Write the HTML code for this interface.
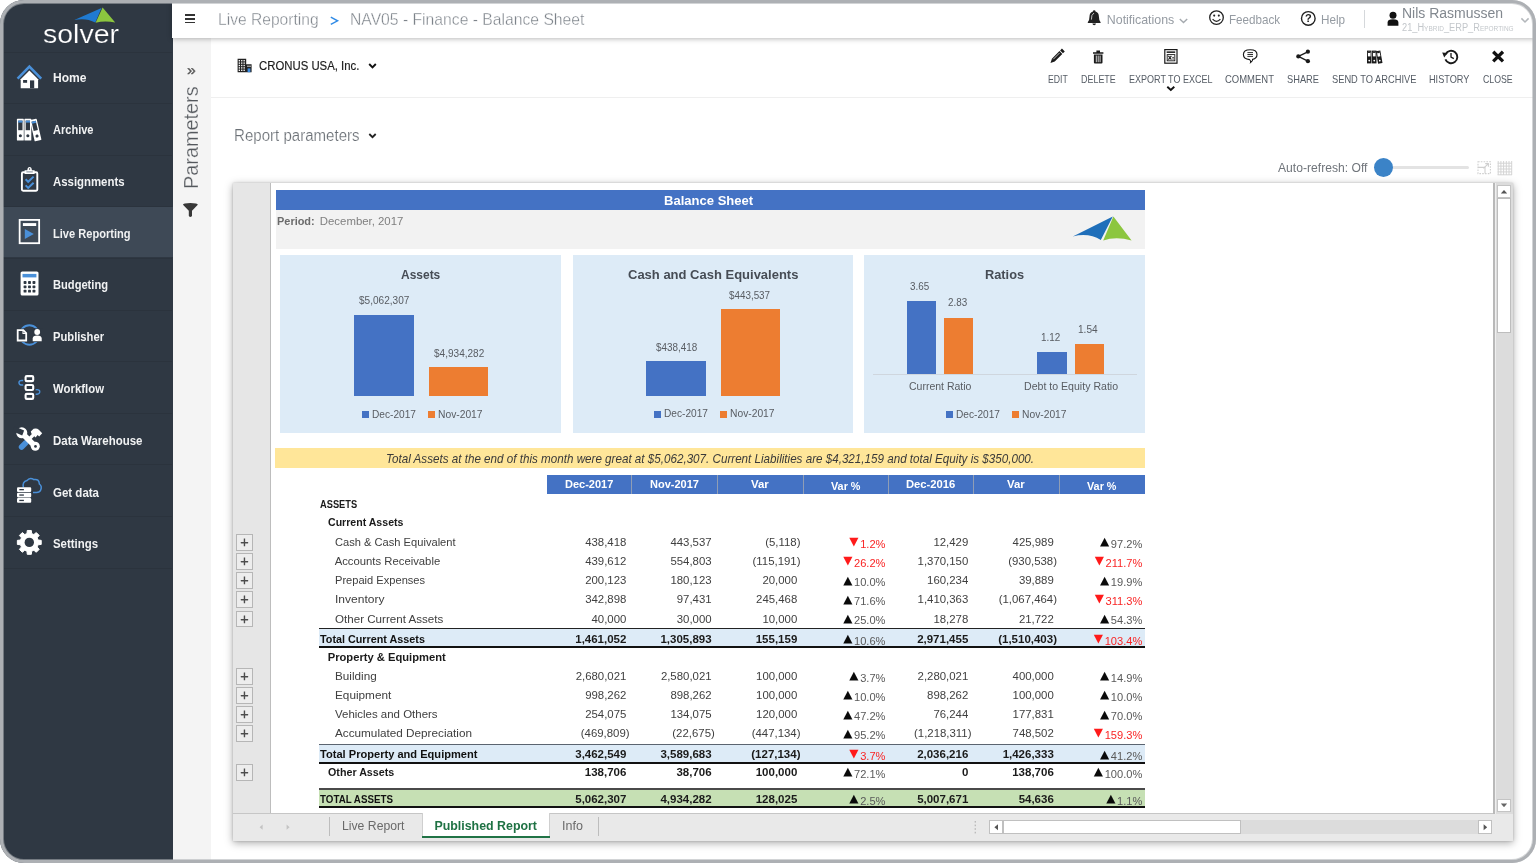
<!DOCTYPE html>
<html lang="en"><head><meta charset="utf-8"><title>NAV05 - Finance - Balance Sheet</title>
<style>
*{margin:0;padding:0;box-sizing:border-box}
html,body{width:1536px;height:863px;overflow:hidden;background:#fff}
body{font-family:"Liberation Sans",sans-serif;position:relative}
.t{position:absolute;white-space:nowrap;line-height:1;transform-origin:0 0;display:block}
.r{position:absolute}
svg{position:absolute;overflow:visible}
#frame{position:absolute;left:0;top:0;width:1536px;height:863px;border-radius:24px;overflow:hidden;background:#fff;will-change:transform}
#edge{position:absolute;left:0;top:0;width:1536px;height:863px;border-radius:24px;box-shadow:inset 0 0 0 3px #adb0b4,inset 0 0 0 4px rgba(173,176,180,.55);pointer-events:none;z-index:50}
.tri{font-family:"DejaVu Sans",sans-serif}
</style></head>
<body>
<div id="frame">
<div class="r" style="left:0.00px;top:0.00px;width:172.80px;height:863.00px;background:#2f3843;"></div>
<div class="r" style="left:172.80px;top:0.00px;width:38.00px;height:863.00px;background:#f4f4f4;"></div>
<div class="r" style="left:211.00px;top:97.30px;width:1325.00px;height:1.00px;background:#efefef;"></div>
<div class="r" style="left:172.00px;top:0.00px;width:1364.00px;height:38.00px;background:#fff;box-shadow:0 1px 5px rgba(0,0,0,.28);z-index:5"></div>
<div class="r" style="left:4.00px;top:51.50px;width:168.00px;height:1.00px;background:rgba(0,0,0,.08);"></div>
<div class="r" style="left:4.00px;top:103.10px;width:168.00px;height:1.00px;background:rgba(0,0,0,.08);"></div>
<div class="r" style="left:4.00px;top:154.70px;width:168.00px;height:1.00px;background:rgba(0,0,0,.08);"></div>
<div class="r" style="left:4.00px;top:206.30px;width:168.00px;height:1.00px;background:rgba(0,0,0,.08);"></div>
<div class="r" style="left:4.00px;top:257.90px;width:168.00px;height:1.00px;background:rgba(0,0,0,.08);"></div>
<div class="r" style="left:4.00px;top:309.50px;width:168.00px;height:1.00px;background:rgba(0,0,0,.08);"></div>
<div class="r" style="left:4.00px;top:361.10px;width:168.00px;height:1.00px;background:rgba(0,0,0,.08);"></div>
<div class="r" style="left:4.00px;top:412.70px;width:168.00px;height:1.00px;background:rgba(0,0,0,.08);"></div>
<div class="r" style="left:4.00px;top:464.30px;width:168.00px;height:1.00px;background:rgba(0,0,0,.08);"></div>
<div class="r" style="left:4.00px;top:515.90px;width:168.00px;height:1.00px;background:rgba(0,0,0,.08);"></div>
<div class="r" style="left:4.00px;top:567.50px;width:168.00px;height:1.00px;background:rgba(0,0,0,.08);"></div>
<div class="r" style="left:0.00px;top:207.30px;width:172.80px;height:49.70px;background:#3e4956;"></div>
<span class="t" style="left:52.50px;top:72px;font-size:12px;color:#f1f2f3;font-weight:700;transform:scaleX(1.0048);">Home</span>
<span class="t" style="left:52.50px;top:124px;font-size:12px;color:#f1f2f3;font-weight:700;transform:scaleX(0.9200);">Archive</span>
<span class="t" style="left:52.50px;top:176px;font-size:12px;color:#f1f2f3;font-weight:700;transform:scaleX(0.9489);">Assignments</span>
<span class="t" style="left:52.50px;top:228px;font-size:12px;color:#f1f2f3;font-weight:700;transform:scaleX(0.9225);">Live Reporting</span>
<span class="t" style="left:52.50px;top:279px;font-size:12px;color:#f1f2f3;font-weight:700;transform:scaleX(0.9271);">Budgeting</span>
<span class="t" style="left:52.50px;top:331px;font-size:12px;color:#f1f2f3;font-weight:700;transform:scaleX(0.9327);">Publisher</span>
<span class="t" style="left:52.50px;top:383px;font-size:12px;color:#f1f2f3;font-weight:700;transform:scaleX(0.9483);">Workflow</span>
<span class="t" style="left:52.50px;top:435px;font-size:12px;color:#f1f2f3;font-weight:700;transform:scaleX(0.9564);">Data Warehouse</span>
<span class="t" style="left:52.50px;top:487px;font-size:12px;color:#f1f2f3;font-weight:700;transform:scaleX(0.9581);">Get data</span>
<span class="t" style="left:52.50px;top:538px;font-size:12px;color:#f1f2f3;font-weight:700;transform:scaleX(0.9506);">Settings</span>
<svg style="left:70px;top:4px" width="50" height="24" viewBox="70 4 50 24"><path d="M74.3 20 L101.5 8 L95.3 22.5 Q86 17.5 74.3 20Z" fill="#1f7ad1"/><path d="M102.6 7.6 L115.2 22.6 Q105 20.2 95.6 22.8Z" fill="#8cc63f"/></svg>
<span class="t" style="left:43.40px;top:22px;font-size:25.5px;color:#fff;transform:scaleX(1.1173);-webkit-text-stroke:.2px #2f3843;">solver</span>
<svg style="left:0;top:0" width="172" height="600" viewBox="0 0 172 600"><path d="M17.6 78.6 L29.4 66.6 L41.2 78.6" fill="none" stroke="#4a90d9" stroke-width="2.6" stroke-linejoin="miter"/><path d="M20.7 79.3 L29.4 70.6 L38.1 79.3 V88.2 H20.7Z" fill="#fff"/><rect x="30" y="80.4" width="4.2" height="7.8" fill="#2f3843"/><rect x="23.1" y="80" width="4" height="2.8" fill="#2f3843"/><g transform=""><rect x="16.9" y="118.8" width="6.9" height="21.8" rx=".6" fill="#fff"/><rect x="18.2" y="120.6" width="4.3" height="9.6" fill="#2f3843"/><rect x="18.2" y="120.6" width="4.3" height="2" fill="#4a90d9"/><circle cx="20.349999999999998" cy="135.8" r="1.55" fill="#2f3843"/></g><g transform=""><rect x="24.4" y="118.8" width="6.9" height="21.8" rx=".6" fill="#fff"/><rect x="25.7" y="120.6" width="4.3" height="9.6" fill="#2f3843"/><rect x="25.7" y="120.6" width="4.3" height="2" fill="#4a90d9"/><circle cx="27.849999999999998" cy="135.8" r="1.55" fill="#2f3843"/></g><g transform="rotate(-13 35.6 130)"><rect x="32.2" y="119.2" width="6.9" height="21.8" rx=".6" fill="#fff"/><rect x="33.5" y="121.0" width="4.3" height="9.6" fill="#2f3843"/><rect x="33.5" y="121.0" width="4.3" height="2" fill="#4a90d9"/><circle cx="35.650000000000006" cy="136.2" r="1.55" fill="#2f3843"/></g><rect x="21.9" y="172.2" width="15.4" height="18.6" rx="1.2" fill="none" stroke="#fff" stroke-width="1.9"/><path d="M24.6 174 V170.3 H27.3 Q27.6 167.1 29.6 167.1 Q31.6 167.1 31.9 170.3 H34.6 V174Z" fill="#fff"/><rect x="26.2" y="171.2" width="6.8" height="1.2" rx=".6" fill="#9aa3ad"/><circle cx="29.6" cy="169" r=".7" fill="#2f3843"/><path d="M25.6 179.3 L28.2 181.8 L33.6 176.6" fill="none" stroke="#4a90d9" stroke-width="2"/><path d="M25.6 185.4 L28.2 187.9 L33.6 182.7" fill="none" stroke="#4a90d9" stroke-width="2"/><rect x="19.65" y="219.9" width="19.5" height="23.3" fill="none" stroke="#fff" stroke-width="1.8"/><rect x="22.9" y="223.1" width="13.3" height="2.9" fill="#fff"/><path d="M24.8 229 L33.8 234 L24.8 239Z" fill="#4a90d9"/><rect x="20.6" y="271.4" width="17.9" height="24.2" rx="1.6" fill="#fff"/><rect x="22.5" y="273.9" width="13.9" height="3.5" fill="#4a90d9"/><rect x="23.60" y="281.10" width="2.9" height="2.9" rx=".7" fill="#2f3843"/><rect x="28.05" y="281.10" width="2.9" height="2.9" rx=".7" fill="#2f3843"/><rect x="32.50" y="281.10" width="2.9" height="2.9" rx=".7" fill="#2f3843"/><rect x="23.60" y="285.40" width="2.9" height="2.9" rx=".7" fill="#2f3843"/><rect x="28.05" y="285.40" width="2.9" height="2.9" rx=".7" fill="#2f3843"/><rect x="32.50" y="285.40" width="2.9" height="2.9" rx=".7" fill="#2f3843"/><rect x="23.60" y="289.70" width="2.9" height="2.9" rx=".7" fill="#2f3843"/><rect x="28.05" y="289.70" width="2.9" height="2.9" rx=".7" fill="#2f3843"/><rect x="32.50" y="289.70" width="2.9" height="2.9" rx=".7" fill="#2f3843"/><circle cx="29.4" cy="335" r="9.7" fill="none" stroke="#4a90d9" stroke-width="1.9"/><rect x="15.6" y="328.6" width="12" height="13.4" fill="#2f3843"/><rect x="32" y="328.4" width="11" height="13.6" fill="#2f3843"/><path d="M17.7 330.2 H23.3 L26.2 333.2 V340.5 H17.7Z" fill="none" stroke="#fff" stroke-width="1.8"/><path d="M23 330.4 V333.5 H26" fill="none" stroke="#fff" stroke-width="1.1"/><circle cx="37.2" cy="332" r="2.9" fill="#fff"/><path d="M32.7 341.3 V338.6 Q32.7 335.6 37.2 335.6 Q41.7 335.6 41.7 338.6 V341.3Z" fill="#fff"/><rect x="25.6" y="376.1" width="7.6" height="5" rx="1.2" fill="none" stroke="#fff" stroke-width="2.1"/><rect x="25.6" y="385" width="7.6" height="5" rx="1.2" fill="none" stroke="#fff" stroke-width="2.1"/><rect x="25.6" y="393.9" width="7.6" height="5" rx="1.2" fill="none" stroke="#fff" stroke-width="2.1"/><path d="M23.2 380.6 Q18.6 380 19 383 Q19.4 385.6 23.2 385" fill="none" stroke="#4a90d9" stroke-width="1.5"/><path d="M35.6 389.8 Q40.2 389.2 39.8 392 Q39.4 394.6 35.6 394.2" fill="none" stroke="#4a90d9" stroke-width="1.3"/><path d="M21.6 447 L25.6 443" stroke="#4a90d9" stroke-width="5.6" stroke-linecap="round"/><path d="M27.6 440.6 L34.6 433.6" stroke="#fff" stroke-width="3.4"/><path d="M30.8 431.6 L33.6 428.8 Q36.8 427.8 38.8 429.8 L42.2 433.2 L39.2 436.6 L37.6 435 L35.6 437.4 L31.4 433.4Z" fill="#fff"/><path d="M23.4 434.6 L34.6 445.8" stroke="#fff" stroke-width="5.6"/><circle cx="21.8" cy="432.8" r="5.5" fill="#fff"/><path d="M17.4 424 L24.8 431.6 L21.2 435.4 L13.8 428Z" fill="#2f3843" transform="rotate(-22 21.8 432.8)"/><circle cx="35.3" cy="446.3" r="4.5" fill="#fff"/><circle cx="35.5" cy="446.4" r="1.35" fill="#2f3843"/><path d="M23.4 487.5 Q22 481.6 27 480.6 Q29.6 476.8 34 479.6 Q39 478.6 39.4 484 Q42.4 486.2 40.6 490.2 Q39.6 492.4 36.6 492.4 H33" fill="none" stroke="#4a90d9" stroke-width="1.5"/><rect x="17" y="487.3" width="14.2" height="4.7" rx="1.1" fill="#fff"/><rect x="19.3" y="489.0" width="4.6" height="1.3" fill="#2f3843"/><rect x="17" y="492.7" width="14.2" height="4.7" rx="1.1" fill="#fff"/><rect x="19.3" y="494.4" width="4.6" height="1.3" fill="#2f3843"/><rect x="17" y="498.1" width="14.2" height="4.7" rx="1.1" fill="#fff"/><rect x="19.3" y="499.8" width="4.6" height="1.3" fill="#2f3843"/><path d="M26.96 533.61 L27.25 530.47 L31.35 530.47 L31.64 533.61 L33.86 534.53 L36.29 532.52 L39.18 535.41 L37.17 537.84 L38.09 540.06 L41.23 540.35 L41.23 544.45 L38.09 544.74 L37.17 546.96 L39.18 549.39 L36.29 552.28 L33.86 550.27 L31.64 551.19 L31.35 554.33 L27.25 554.33 L26.96 551.19 L24.74 550.27 L22.31 552.28 L19.42 549.39 L21.43 546.96 L20.51 544.74 L17.37 544.45 L17.37 540.35 L20.51 540.06 L21.43 537.84 L19.42 535.41 L22.31 532.52 L24.74 534.53Z" fill="#fff" stroke="#fff" stroke-width="1" stroke-linejoin="round"/><circle cx="29.3" cy="542.4" r="4.7" fill="#2f3843"/></svg>
<div class="r" style="left:185.00px;top:14.10px;width:9.60px;height:1.70px;background:#333;z-index:6;"></div>
<div class="r" style="left:185.00px;top:17.90px;width:9.60px;height:1.70px;background:#333;z-index:6;"></div>
<div class="r" style="left:185.00px;top:21.70px;width:9.60px;height:1.70px;background:#333;z-index:6;"></div>
<span class="t" style="left:218.10px;top:11px;font-size:16.1px;color:#7d838a;transform:scaleX(0.9690);z-index:6;-webkit-text-stroke:.35px #fff;">Live Reporting</span>
<svg style="left:329px;top:14px;z-index:6" width="10" height="12" viewBox="0 0 10 12"><path d="M1.8 3.2 L8.6 6.8 L1.8 10.4" fill="none" stroke="#2e8ae6" stroke-width="1.4"/></svg>
<span class="t" style="left:350.00px;top:11px;font-size:16.1px;color:#7d838a;transform:scaleX(0.9753);z-index:6;-webkit-text-stroke:.35px #fff;">NAV05 - Finance - Balance Sheet</span>
<svg style="left:1086px;top:9px;z-index:6" width="16" height="17" viewBox="1086 9 16 17"><path d="M1094.2 10.2 Q1095.6 10.2 1095.5 11.6 Q1098.9 12.6 1098.9 16.6 Q1098.9 20.6 1100.6 22.2 V22.9 H1087.8 V22.2 Q1089.5 20.6 1089.5 16.6 Q1089.5 12.6 1092.9 11.6 Q1092.8 10.2 1094.2 10.2Z" fill="#222"/><path d="M1092.4 23.6 H1096 Q1095.8 25.2 1094.2 25.2 Q1092.6 25.2 1092.4 23.6Z" fill="#222"/><path d="M1091.4 19.6 Q1091.2 14.4 1094 13" fill="none" stroke="#fff" stroke-width=".7"/></svg>
<span class="t" style="left:1106.80px;top:14px;font-size:12.4px;color:#959ba2;z-index:6;">Notifications</span>
<svg style="left:1179px;top:18px;z-index:6" width="9" height="6" viewBox="0 0 9 6"><path d="M.8 1 L4.5 4.6 L8.2 1" fill="none" stroke="#a4a9ae" stroke-width="1.4"/></svg>
<svg style="left:1208px;top:9px;z-index:6" width="17" height="17" viewBox="1208 9 17 17"><circle cx="1216.5" cy="17.6" r="6.8" fill="none" stroke="#222" stroke-width="1.3"/><circle cx="1214.2" cy="15.6" r="1.05" fill="#222"/><circle cx="1218.8" cy="15.6" r="1.05" fill="#222"/><path d="M1212.6 19.2 Q1216.5 23.4 1220.4 19.2" fill="none" stroke="#222" stroke-width="1.2"/></svg>
<span class="t" style="left:1228.80px;top:14px;font-size:12.4px;color:#959ba2;transform:scaleX(0.9402);z-index:6;">Feedback</span>
<svg style="left:1300px;top:10px;z-index:6" width="17" height="17" viewBox="1300 10 17 17"><circle cx="1308.3" cy="18.4" r="6.8" fill="none" stroke="#222" stroke-width="1.4"/></svg>
<span class="t" style="left:1304.94px;top:13px;font-size:11px;color:#222;font-weight:700;z-index:6;">?</span>
<span class="t" style="left:1320.70px;top:14px;font-size:12.4px;color:#959ba2;transform:scaleX(0.9450);z-index:6;">Help</span>
<div class="r" style="left:1364.00px;top:9.70px;width:1.00px;height:18.50px;background:#d5d8db;z-index:6;"></div>
<svg style="left:1386px;top:11px;z-index:6" width="14" height="16" viewBox="1386 11 14 16"><circle cx="1393" cy="15.3" r="3.5" fill="#111"/><path d="M1387.6 25.8 V22.4 Q1387.6 19.2 1393 19.2 Q1398.4 19.2 1398.4 22.4 V25.8Z" fill="#111"/></svg>
<span class="t" style="left:1402.00px;top:6px;font-size:14px;color:#82888f;z-index:6;">Nils Rasmussen</span>
<span class="t" style="left:1402px;top:23px;font-size:10px;color:#c3c7cb;font-variant:small-caps;z-index:6;transform:scaleX(0.9251)">21_Hybrid_ERP_Reporting</span>
<svg style="left:1520px;top:17px;z-index:6" width="10" height="7" viewBox="0 0 10 7"><path d="M1.4 1.4 L5 5 L8.6 1.4" fill="none" stroke="#b3b7bb" stroke-width="1.5"/></svg>
<span class="t" style="left:187.40px;top:62px;font-size:15px;color:#555;transform:scaleX(1.0548);-webkit-text-stroke:.3px #555;">»</span>
<span class="t" style="left:181.7px;top:188.5px;font-size:19.6px;color:#54585d;transform-origin:0 0;transform:rotate(-90deg) scaleX(1.0128);-webkit-text-stroke:.25px #f4f4f4">Parameters</span>
<svg style="left:182px;top:202px" width="17" height="16" viewBox="182 202 17 16"><path d="M183 204.8 Q183 203.1 190.4 203.1 Q197.8 203.1 197.8 204.8 L192 210.8 V215.8 Q192 216.9 190.4 216.9 Q188.8 216.9 188.8 215.8 V210.8Z" fill="#383838"/></svg>
<svg style="left:236px;top:57px" width="17" height="17" viewBox="236 57 17 17"><path d="M237.6 58.8 H246.2 V72.2 H237.6Z M246.2 64.2 H251.6 V72.2 H246.2Z" fill="#222"/><rect x="238.70" y="60.00" width="1.3" height="1.4" fill="#fff"/><rect x="241.10" y="60.00" width="1.3" height="1.4" fill="#fff"/><rect x="243.50" y="60.00" width="1.3" height="1.4" fill="#fff"/><rect x="238.70" y="62.40" width="1.3" height="1.4" fill="#fff"/><rect x="241.10" y="62.40" width="1.3" height="1.4" fill="#fff"/><rect x="243.50" y="62.40" width="1.3" height="1.4" fill="#fff"/><rect x="238.70" y="64.80" width="1.3" height="1.4" fill="#fff"/><rect x="241.10" y="64.80" width="1.3" height="1.4" fill="#fff"/><rect x="243.50" y="64.80" width="1.3" height="1.4" fill="#fff"/><rect x="238.70" y="67.20" width="1.3" height="1.4" fill="#fff"/><rect x="241.10" y="67.20" width="1.3" height="1.4" fill="#fff"/><rect x="243.50" y="67.20" width="1.3" height="1.4" fill="#fff"/><rect x="238.70" y="69.60" width="1.3" height="1.4" fill="#fff"/><rect x="241.10" y="69.60" width="1.3" height="1.4" fill="#fff"/><rect x="243.50" y="69.60" width="1.3" height="1.4" fill="#fff"/><rect x="247.4" y="65.6" width="1.2" height="1.3" fill="#fff"/><rect x="249.4" y="65.6" width="1.2" height="1.3" fill="#fff"/><rect x="247.6" y="68.4" width="2.8" height="3.8" fill="#3b8be0"/></svg>
<span class="t" style="left:259.20px;top:60px;font-size:12.6px;color:#1b1b1b;transform:scaleX(0.9019);-webkit-text-stroke:.18px #1b1b1b;">CRONUS USA, Inc.</span>
<svg style="left:368px;top:62px" width="9" height="8" viewBox="0 0 9 8"><path d="M1.2 2 L4.5 5.4 L7.8 2" fill="none" stroke="#111" stroke-width="1.9"/></svg>
<span class="t" style="left:234.40px;top:128px;font-size:15.8px;color:#6b7076;transform:scaleX(0.9535);-webkit-text-stroke:.2px #fff;">Report parameters</span>
<svg style="left:368px;top:132px" width="9" height="8" viewBox="0 0 9 8"><path d="M1.3 2 L4.5 5.2 L7.7 2" fill="none" stroke="#222" stroke-width="1.8"/></svg>
<span class="t" style="left:1277.60px;top:162px;font-size:12.2px;color:#70757b;transform:scaleX(0.9949);">Auto-refresh: Off</span>
<div class="r" style="left:1386.00px;top:166.00px;width:83.40px;height:3.00px;background:#e3e3e3;border-radius:2px"></div>
<div class="r" style="left:1373.60px;top:158.00px;width:19.40px;height:19.40px;background:#3b83c7;border-radius:50%"></div>
<svg style="left:1476px;top:160px" width="38" height="16" viewBox="1476 160 38 16"><g fill="none" stroke="#cfcfcf" stroke-width="1.1"><path d="M1478 161.8 H1490.4 V173.6 H1478Z" stroke-dasharray="1.6 1.2"/><path d="M1478 167.4 H1485 V173.6"/><path d="M1483.4 168.4 L1488.4 163.6 M1485.2 163.6 H1488.4 V166.8"/></g><g stroke="#d4d4d4" stroke-width="1"><path d="M1498.2 161 V175"/><path d="M1500.9 161 V175"/><path d="M1503.6 161 V175"/><path d="M1506.3 161 V175"/><path d="M1509.0 161 V175"/><path d="M1511.7 161 V175"/><path d="M1497.6 163.2 H1512"/><path d="M1497.6 166.1 H1512"/><path d="M1497.6 169.0 H1512"/><path d="M1497.6 171.9 H1512"/><path d="M1497.6 174.8 H1512"/></g></svg>
<span class="t" style="left:1047.50px;top:75px;font-size:10.2px;color:#555c65;transform:scaleX(0.8522);">EDIT</span>
<span class="t" style="left:1081.00px;top:75px;font-size:10.2px;color:#555c65;transform:scaleX(0.8770);">DELETE</span>
<span class="t" style="left:1128.60px;top:75px;font-size:10.2px;color:#555c65;transform:scaleX(0.8848);">EXPORT TO EXCEL</span>
<span class="t" style="left:1225.40px;top:75px;font-size:10.2px;color:#555c65;transform:scaleX(0.9299);">COMMENT</span>
<span class="t" style="left:1287.20px;top:75px;font-size:10.2px;color:#555c65;transform:scaleX(0.9105);">SHARE</span>
<span class="t" style="left:1332.00px;top:75px;font-size:10.2px;color:#555c65;transform:scaleX(0.9127);">SEND TO ARCHIVE</span>
<span class="t" style="left:1429.30px;top:75px;font-size:10.2px;color:#555c65;transform:scaleX(0.8984);">HISTORY</span>
<span class="t" style="left:1483.00px;top:75px;font-size:10.2px;color:#555c65;transform:scaleX(0.8589);">CLOSE</span>
<svg style="left:1040px;top:44px" width="480" height="50" viewBox="1040 44 480 50"><g transform="rotate(45 1057 56.4)"><path d="M1055 47.4 H1059 V50 H1055Z M1055 50.9 H1059 V61.6 L1057 65.6 L1055 61.6Z" fill="#1a1a1a"/><path d="M1056.4 52 V61" stroke="#fff" stroke-width=".7"/></g><path d="M1093 52.2 H1103.4 V53.7 H1093Z M1096.4 50.6 H1100 V52.2 H1096.4Z" fill="#1a1a1a"/><path d="M1093.9 54.6 H1102.5 V62.6 Q1102.5 63.6 1101.5 63.6 H1094.9 Q1093.9 63.6 1093.9 62.6Z" fill="#1a1a1a"/><path d="M1096.3 55.6 V62.2 M1098.2 55.6 V62.2 M1100.1 55.6 V62.2" stroke="#fff" stroke-width=".8"/><rect x="1164.8" y="49.6" width="12.2" height="13.6" fill="none" stroke="#1a1a1a" stroke-width="1.2"/><rect x="1166.6" y="51.4" width="8.6" height="1.5" fill="#1a1a1a"/><rect x="1167.2" y="54.6" width="7.6" height="6.2" fill="none" stroke="#1a1a1a" stroke-width=".9"/><path d="M1168.4 55.8 L1171.4 59.6 M1171.4 55.8 L1168.4 59.6" stroke="#1a1a1a" stroke-width="1.1"/><path d="M1172.2 57.4 H1174 M1172.2 59 H1174" stroke="#1a1a1a" stroke-width=".8"/><path d="M1167.3 86.8 L1170.8 90 L1174.3 86.8" fill="none" stroke="#111" stroke-width="1.9"/><path d="M1250.2 49.7 Q1257 49.7 1257 54.6 Q1257 58.6 1252.6 59.4 Q1252.8 61.4 1250.6 62.6 Q1251.2 60.8 1249.6 59.6 Q1243.4 59.2 1243.4 54.6 Q1243.4 49.7 1250.2 49.7Z" fill="none" stroke="#1a1a1a" stroke-width="1.15"/><path d="M1247.4 52.6 H1253 M1247.4 54.5 H1253 M1247.4 56.4 H1253" stroke="#1a1a1a" stroke-width=".9"/><path d="M1298.4 56.4 L1307.8 51.8 M1298.4 56.4 L1307.8 61.2" stroke="#1a1a1a" stroke-width="1.3"/><circle cx="1298.3" cy="56.4" r="2.1" fill="#1a1a1a"/><circle cx="1307.9" cy="51.7" r="2.1" fill="#1a1a1a"/><circle cx="1307.9" cy="61.2" r="2.1" fill="#1a1a1a"/><g transform=""><rect x="1367" y="50.6" width="4.5" height="12.8" fill="#1a1a1a"/><rect x="1367.9" y="51.800000000000004" width="2.7" height="4.6" fill="#fff"/><rect x="1367.9" y="51.800000000000004" width="2.7" height="1.1" fill="#1a1a1a"/><circle cx="1369.25" cy="60.6" r=".9" fill="#fff"/></g><g transform=""><rect x="1372" y="50.6" width="4.5" height="12.8" fill="#1a1a1a"/><rect x="1372.9" y="51.800000000000004" width="2.7" height="4.6" fill="#fff"/><rect x="1372.9" y="51.800000000000004" width="2.7" height="1.1" fill="#1a1a1a"/><circle cx="1374.25" cy="60.6" r=".9" fill="#fff"/></g><g transform="rotate(-10 1379 57)"><rect x="1376.9" y="50.8" width="4.5" height="12.8" fill="#1a1a1a"/><rect x="1377.8000000000002" y="52.0" width="2.7" height="4.6" fill="#fff"/><rect x="1377.8000000000002" y="52.0" width="2.7" height="1.1" fill="#1a1a1a"/><circle cx="1379.15" cy="60.8" r=".9" fill="#fff"/></g><path d="M1445.6 54.2 A6.2 6.2 0 1 1 1445.4 59.4" fill="none" stroke="#1a1a1a" stroke-width="1.9"/><path d="M1442.2 52.4 L1447.6 53 L1444.2 57.6Z" fill="#1a1a1a"/><path d="M1451 53 V57 L1453.8 58.6" fill="none" stroke="#1a1a1a" stroke-width="1.3"/><path d="M1493.2 51.8 L1503 61.4 M1503 51.8 L1493.2 61.4" stroke="#111" stroke-width="3.3"/></svg>
<div class="r" style="left:233.30px;top:183.20px;width:1280.10px;height:657.40px;background:#fff;box-shadow:0 2px 8px rgba(0,0,0,.34),0 0 2px rgba(0,0,0,.18)"></div>
<div class="r" style="left:233.30px;top:183.20px;width:36.50px;height:630.00px;background:#e6e6e6;"></div>
<div class="r" style="left:269.60px;top:183.20px;width:1.20px;height:630.00px;background:#bdbdbd;"></div>
<div class="r" style="left:233.30px;top:813.60px;width:1280.10px;height:27.00px;background:#e9e9e9;"></div>
<div class="r" style="left:233.30px;top:812.60px;width:1260.00px;height:1.40px;background:#c6c6c6;"></div>
<div class="r" style="left:1492.80px;top:183.20px;width:20.60px;height:630.40px;background:#dcdcdc;"></div>
<div class="r" style="left:1492.80px;top:183.20px;width:2.00px;height:630.40px;background:#b9b9b9;"></div>
<div class="r" style="left:1494.80px;top:183.20px;width:1.40px;height:630.40px;background:#efefef;"></div>
<div class="r" style="left:1497.00px;top:184.60px;width:14.00px;height:13.80px;background:#fff;border:1px solid #c4c4c4"></div>
<div class="r" style="left:1497.00px;top:198.40px;width:14.00px;height:135.00px;background:#fff;border:1px solid #bdbdbd"></div>
<div class="r" style="left:1497.00px;top:798.80px;width:14.00px;height:13.20px;background:#fff;border:1px solid #c4c4c4"></div>
<svg style="left:1497px;top:184px" width="14" height="630" viewBox="1497 184 14 630"><path d="M1500.8 193.6 L1504 190 L1507.2 193.6Z" fill="#555"/><path d="M1500.8 803.6 L1504 807.2 L1507.2 803.6Z" fill="#666"/></svg>
<div class="r" style="left:989.40px;top:820.40px;width:503.00px;height:13.60px;background:#dcdcdc;"></div>
<div class="r" style="left:989.40px;top:820.40px;width:13.80px;height:13.60px;background:#fff;border:1px solid #c0c0c0"></div>
<div class="r" style="left:1003.20px;top:820.40px;width:237.80px;height:13.60px;background:#fff;border:1px solid #c0c0c0"></div>
<div class="r" style="left:1478.20px;top:820.40px;width:14.20px;height:13.60px;background:#fff;border:1px solid #c0c0c0"></div>
<svg style="left:970px;top:818px" width="530" height="18" viewBox="970 818 530 18"><path d="M998 824.2 L994.4 827.2 L998 830.2Z" fill="#555"/><path d="M1483.6 824.2 L1487.2 827.2 L1483.6 830.2Z" fill="#555"/><g fill="#bbb"><rect x="974.6" y="821" width="1.4" height="1.6"/><rect x="974.6" y="824.6" width="1.4" height="1.6"/><rect x="974.6" y="828.2" width="1.4" height="1.6"/><rect x="974.6" y="831.8" width="1.4" height="1.6"/></g></svg>
<svg style="left:255px;top:820px" width="40" height="14" viewBox="255 820 40 14"><path d="M262.6 824.6 L259.6 827.2 L262.6 829.8Z" fill="#c3c3c3"/><path d="M286.6 824.6 L289.6 827.2 L286.6 829.8Z" fill="#c3c3c3"/></svg>
<div class="r" style="left:329.20px;top:817.40px;width:1.20px;height:18.40px;background:#bdbdbd;"></div>
<span class="t" style="left:342.00px;top:820px;font-size:12.3px;color:#6a6a6a;transform:scaleX(0.9936);">Live Report</span>
<div class="r" style="left:422.00px;top:813.20px;width:128.00px;height:22.60px;background:#fff;border-left:1px solid #cfcfcf;border-right:1px solid #cfcfcf"></div>
<div class="r" style="left:422.00px;top:835.60px;width:128.00px;height:2.20px;background:#217346;"></div>
<span class="t" style="left:434.40px;top:820px;font-size:12.4px;color:#1f7244;font-weight:700;">Published Report</span>
<span class="t" style="left:562.00px;top:820px;font-size:12.3px;color:#6a6a6a;transform:scaleX(1.0187);">Info</span>
<div class="r" style="left:598.00px;top:817.40px;width:1.20px;height:18.40px;background:#bdbdbd;"></div>
<div class="r" style="left:275.50px;top:189.80px;width:869.80px;height:19.80px;background:#4472c4;"></div>
<span class="t" style="left:664.00px;top:195px;font-size:12.6px;color:#fff;font-weight:700;transform:scaleX(1.0355);">Balance Sheet</span>
<div class="r" style="left:275.50px;top:209.60px;width:869.80px;height:39.50px;background:#f2f2f2;"></div>
<span class="t" style="left:277.00px;top:216px;font-size:11.4px;color:#6b6b6b;font-weight:700;transform:scaleX(0.9600);">Period:</span>
<span class="t" style="left:319.80px;top:216px;font-size:11.4px;color:#7f7f7f;">December, 2017</span>
<svg style="left:1070px;top:214px" width="64" height="28" viewBox="1070 214 64 28"><path d="M1072.8 236.4 L1112.8 216.4 L1100.8 240 Q1089 232.6 1072.8 236.4Z" fill="#1f6fba"/><path d="M1113.4 216.6 L1131.6 240.4 Q1116 236.2 1103.2 240.4Z" fill="#8cc63f"/></svg>
<div class="r" style="left:280.20px;top:254.60px;width:281.20px;height:178.40px;background:#ddebf7;"></div>
<span class="t" style="left:400.60px;top:269px;font-size:12.6px;color:#464c55;font-weight:700;transform:scaleX(0.9510);">Assets</span>
<span class="t" style="left:358.50px;top:296px;font-size:10.4px;color:#585c62;transform:scaleX(0.9683);">$5,062,307</span>
<div class="r" style="left:354.00px;top:315.00px;width:59.70px;height:80.90px;background:#4472c4;"></div>
<span class="t" style="left:433.80px;top:349px;font-size:10.4px;color:#585c62;transform:scaleX(0.9663);">$4,934,282</span>
<div class="r" style="left:429.30px;top:366.50px;width:58.70px;height:29.40px;background:#ed7d31;"></div>
<div class="r" style="left:361.50px;top:410.60px;width:7.30px;height:7.20px;background:#4472c4;"></div>
<span class="t" style="left:371.60px;top:410px;font-size:10.2px;color:#585c62;transform:scaleX(0.9948);">Dec-2017</span>
<div class="r" style="left:428.00px;top:410.60px;width:7.30px;height:7.20px;background:#ed7d31;"></div>
<span class="t" style="left:438.30px;top:410px;font-size:10.2px;color:#585c62;transform:scaleX(1.0084);">Nov-2017</span>
<div class="r" style="left:572.60px;top:254.60px;width:280.80px;height:178.40px;background:#ddebf7;"></div>
<span class="t" style="left:627.50px;top:269px;font-size:12.6px;color:#464c55;font-weight:700;transform:scaleX(1.0318);">Cash and Cash Equivalents</span>
<span class="t" style="left:729.20px;top:291px;font-size:10.4px;color:#585c62;transform:scaleX(0.9475);">$443,537</span>
<div class="r" style="left:721.30px;top:309.40px;width:59.10px;height:86.90px;background:#ed7d31;"></div>
<span class="t" style="left:655.70px;top:343px;font-size:10.4px;color:#585c62;transform:scaleX(0.9521);">$438,418</span>
<div class="r" style="left:646.00px;top:361.30px;width:59.70px;height:35.00px;background:#4472c4;"></div>
<div class="r" style="left:653.60px;top:410.60px;width:7.30px;height:7.20px;background:#4472c4;"></div>
<span class="t" style="left:664.00px;top:409px;font-size:10.2px;color:#585c62;transform:scaleX(0.9948);">Dec-2017</span>
<div class="r" style="left:720.20px;top:410.60px;width:7.30px;height:7.20px;background:#ed7d31;"></div>
<span class="t" style="left:730.30px;top:409px;font-size:10.2px;color:#585c62;transform:scaleX(1.0084);">Nov-2017</span>
<div class="r" style="left:864.00px;top:254.60px;width:281.30px;height:178.40px;background:#ddebf7;"></div>
<span class="t" style="left:984.90px;top:269px;font-size:12.6px;color:#464c55;font-weight:700;transform:scaleX(1.0154);">Ratios</span>
<div class="r" style="left:873.00px;top:373.90px;width:264.40px;height:1.00px;background:#cfd6de;"></div>
<span class="t" style="left:910.30px;top:282px;font-size:10.4px;color:#585c62;transform:scaleX(0.9485);">3.65</span>
<div class="r" style="left:906.50px;top:301.00px;width:29.40px;height:72.90px;background:#4472c4;"></div>
<span class="t" style="left:947.60px;top:298px;font-size:10.4px;color:#585c62;transform:scaleX(0.9485);">2.83</span>
<div class="r" style="left:943.80px;top:318.00px;width:28.90px;height:55.90px;background:#ed7d31;"></div>
<span class="t" style="left:1040.70px;top:333px;font-size:10.4px;color:#585c62;transform:scaleX(0.9535);">1.12</span>
<div class="r" style="left:1037.00px;top:351.60px;width:30.30px;height:22.30px;background:#4472c4;"></div>
<span class="t" style="left:1078.20px;top:325px;font-size:10.4px;color:#585c62;transform:scaleX(0.9683);">1.54</span>
<div class="r" style="left:1074.60px;top:343.70px;width:29.60px;height:30.20px;background:#ed7d31;"></div>
<span class="t" style="left:908.80px;top:382px;font-size:10.2px;color:#585c62;transform:scaleX(1.0304);">Current Ratio</span>
<span class="t" style="left:1024.00px;top:382px;font-size:10.2px;color:#585c62;transform:scaleX(1.0384);">Debt to Equity Ratio</span>
<div class="r" style="left:945.60px;top:410.60px;width:7.30px;height:7.20px;background:#4472c4;"></div>
<span class="t" style="left:955.50px;top:410px;font-size:10.2px;color:#585c62;transform:scaleX(0.9948);">Dec-2017</span>
<div class="r" style="left:1011.80px;top:410.60px;width:7.30px;height:7.20px;background:#ed7d31;"></div>
<span class="t" style="left:1022.20px;top:410px;font-size:10.2px;color:#585c62;transform:scaleX(1.0084);">Nov-2017</span>
<div class="r" style="left:275.30px;top:447.80px;width:870.00px;height:20.20px;background:#ffe699;"></div>
<span class="t" style="left:385.90px;top:454px;font-size:11.9px;color:#3a3a3a;font-style:italic;transform:scaleX(0.9788);">Total Assets at the end of this month were great at $5,062,307. Current Liabilities are $4,321,159 and total Equity is $350,000.</span>
<div class="r" style="left:546.80px;top:474.80px;width:598.50px;height:19.50px;background:#4472c4;"></div>
<div class="r" style="left:631.10px;top:474.80px;width:1.00px;height:19.50px;background:#8f9db5;"></div>
<div class="r" style="left:716.70px;top:474.80px;width:1.00px;height:19.50px;background:#8f9db5;"></div>
<div class="r" style="left:802.50px;top:474.80px;width:1.00px;height:19.50px;background:#8f9db5;"></div>
<div class="r" style="left:887.70px;top:474.80px;width:1.00px;height:19.50px;background:#8f9db5;"></div>
<div class="r" style="left:973.10px;top:474.80px;width:1.00px;height:19.50px;background:#8f9db5;"></div>
<div class="r" style="left:1058.90px;top:474.80px;width:1.00px;height:19.50px;background:#8f9db5;"></div>
<span class="t" style="left:564.80px;top:478px;font-size:11.6px;color:#fff;font-weight:700;transform:scaleX(0.9499);">Dec-2017</span>
<span class="t" style="left:649.60px;top:478px;font-size:11.6px;color:#fff;font-weight:700;transform:scaleX(0.9499);">Nov-2017</span>
<span class="t" style="left:750.60px;top:478px;font-size:11.6px;color:#fff;font-weight:700;transform:scaleX(0.9854);">Var</span>
<span class="t" style="left:830.80px;top:480px;font-size:11.6px;color:#fff;font-weight:700;transform:scaleX(0.9335);">Var %</span>
<span class="t" style="left:906.40px;top:478px;font-size:11.6px;color:#fff;font-weight:700;transform:scaleX(0.9696);">Dec-2016</span>
<span class="t" style="left:1007.40px;top:478px;font-size:11.6px;color:#fff;font-weight:700;transform:scaleX(0.9799);">Var</span>
<span class="t" style="left:1087.30px;top:480px;font-size:11.6px;color:#fff;font-weight:700;transform:scaleX(0.9335);">Var %</span>
<span class="t" style="left:320.00px;top:499px;font-size:11.2px;color:#1a1a1a;font-weight:700;transform:scaleX(0.8301);">ASSETS</span>
<span class="t" style="left:327.80px;top:517px;font-size:11.2px;color:#1a1a1a;font-weight:700;transform:scaleX(0.9452);">Current Assets</span>
<span class="t" style="left:334.70px;top:537px;font-size:11.3px;color:#404040;transform:scaleX(0.9846);">Cash &amp; Cash Equivalent</span>
<span class="t" style="left:585.19px;top:537px;font-size:11.4px;color:#3f3f3f;">438,418</span>
<span class="t" style="left:670.39px;top:537px;font-size:11.4px;color:#3f3f3f;">443,537</span>
<span class="t" style="left:765.22px;top:537px;font-size:11.4px;color:#3f3f3f;">(5,118)</span>
<span class="t" style="left:860.20px;top:539px;font-size:11.1px;color:#f92424;">1.2%</span>
<span class="t tri" style="left:849.37px;top:535.62px;font-size:12.0px;color:#ff1a1a;transform:scaleY(0.935)">▼</span>
<span class="t" style="left:933.43px;top:537px;font-size:11.4px;color:#3f3f3f;">12,429</span>
<span class="t" style="left:1012.59px;top:537px;font-size:11.4px;color:#3f3f3f;">425,989</span>
<span class="t" style="left:1110.83px;top:539px;font-size:11.1px;color:#595959;">97.2%</span>
<span class="t tri" style="left:1100.00px;top:536.02px;font-size:12.0px;color:#0a0a0a;transform:scaleY(0.935)">▲</span>
<div class="r" style="left:235.80px;top:533.80px;width:17.40px;height:16.80px;background:#ededed;border:1px solid #b6b6b6"></div>
<span class="t" style="left:240.27px;top:535px;font-size:14.5px;color:#4d4d4d;-webkit-text-stroke:.3px #4d4d4d;">+</span>
<span class="t" style="left:334.70px;top:556px;font-size:11.3px;color:#404040;">Accounts Receivable</span>
<span class="t" style="left:585.19px;top:556px;font-size:11.4px;color:#3f3f3f;">439,612</span>
<span class="t" style="left:670.39px;top:556px;font-size:11.4px;color:#3f3f3f;">554,803</span>
<span class="t" style="left:752.54px;top:556px;font-size:11.4px;color:#3f3f3f;">(115,191)</span>
<span class="t" style="left:854.03px;top:558px;font-size:11.1px;color:#f92424;">26.2%</span>
<span class="t tri" style="left:843.20px;top:554.92px;font-size:12.0px;color:#ff1a1a;transform:scaleY(0.935)">▼</span>
<span class="t" style="left:917.58px;top:556px;font-size:11.4px;color:#3f3f3f;">1,370,150</span>
<span class="t" style="left:1008.20px;top:556px;font-size:11.4px;color:#3f3f3f;">(930,538)</span>
<span class="t" style="left:1105.48px;top:558px;font-size:11.1px;color:#f92424;">211.7%</span>
<span class="t tri" style="left:1094.65px;top:554.92px;font-size:12.0px;color:#ff1a1a;transform:scaleY(0.935)">▼</span>
<div class="r" style="left:235.80px;top:553.10px;width:17.40px;height:16.80px;background:#ededed;border:1px solid #b6b6b6"></div>
<span class="t" style="left:240.27px;top:554px;font-size:14.5px;color:#4d4d4d;-webkit-text-stroke:.3px #4d4d4d;">+</span>
<span class="t" style="left:334.70px;top:575px;font-size:11.3px;color:#404040;transform:scaleX(0.9824);">Prepaid Expenses</span>
<span class="t" style="left:585.19px;top:575px;font-size:11.4px;color:#3f3f3f;">200,123</span>
<span class="t" style="left:670.39px;top:575px;font-size:11.4px;color:#3f3f3f;">180,123</span>
<span class="t" style="left:762.43px;top:575px;font-size:11.4px;color:#3f3f3f;">20,000</span>
<span class="t" style="left:854.03px;top:577px;font-size:11.1px;color:#595959;">10.0%</span>
<span class="t tri" style="left:843.20px;top:574.52px;font-size:12.0px;color:#0a0a0a;transform:scaleY(0.935)">▲</span>
<span class="t" style="left:927.09px;top:575px;font-size:11.4px;color:#3f3f3f;">160,234</span>
<span class="t" style="left:1018.93px;top:575px;font-size:11.4px;color:#3f3f3f;">39,889</span>
<span class="t" style="left:1110.83px;top:577px;font-size:11.1px;color:#595959;">19.9%</span>
<span class="t tri" style="left:1100.00px;top:574.52px;font-size:12.0px;color:#0a0a0a;transform:scaleY(0.935)">▲</span>
<div class="r" style="left:235.80px;top:572.30px;width:17.40px;height:16.80px;background:#ededed;border:1px solid #b6b6b6"></div>
<span class="t" style="left:240.27px;top:573px;font-size:14.5px;color:#4d4d4d;-webkit-text-stroke:.3px #4d4d4d;">+</span>
<span class="t" style="left:334.70px;top:594px;font-size:11.3px;color:#404040;transform:scaleX(1.0650);">Inventory</span>
<span class="t" style="left:585.19px;top:594px;font-size:11.4px;color:#3f3f3f;">342,898</span>
<span class="t" style="left:676.73px;top:594px;font-size:11.4px;color:#3f3f3f;">97,431</span>
<span class="t" style="left:756.09px;top:594px;font-size:11.4px;color:#3f3f3f;">245,468</span>
<span class="t" style="left:854.03px;top:596px;font-size:11.1px;color:#595959;">71.6%</span>
<span class="t tri" style="left:843.20px;top:593.62px;font-size:12.0px;color:#0a0a0a;transform:scaleY(0.935)">▲</span>
<span class="t" style="left:917.58px;top:594px;font-size:11.4px;color:#3f3f3f;">1,410,363</span>
<span class="t" style="left:998.69px;top:594px;font-size:11.4px;color:#3f3f3f;">(1,067,464)</span>
<span class="t" style="left:1105.48px;top:596px;font-size:11.1px;color:#f92424;">311.3%</span>
<span class="t tri" style="left:1094.65px;top:593.22px;font-size:12.0px;color:#ff1a1a;transform:scaleY(0.935)">▼</span>
<div class="r" style="left:235.80px;top:591.40px;width:17.40px;height:16.80px;background:#ededed;border:1px solid #b6b6b6"></div>
<span class="t" style="left:240.27px;top:592px;font-size:14.5px;color:#4d4d4d;-webkit-text-stroke:.3px #4d4d4d;">+</span>
<span class="t" style="left:334.70px;top:614px;font-size:11.3px;color:#404040;transform:scaleX(1.0264);">Other Current Assets</span>
<span class="t" style="left:591.53px;top:614px;font-size:11.4px;color:#3f3f3f;">40,000</span>
<span class="t" style="left:676.73px;top:614px;font-size:11.4px;color:#3f3f3f;">30,000</span>
<span class="t" style="left:762.43px;top:614px;font-size:11.4px;color:#3f3f3f;">10,000</span>
<span class="t" style="left:854.03px;top:615px;font-size:11.1px;color:#595959;">25.0%</span>
<span class="t tri" style="left:843.20px;top:612.82px;font-size:12.0px;color:#0a0a0a;transform:scaleY(0.935)">▲</span>
<span class="t" style="left:933.43px;top:614px;font-size:11.4px;color:#3f3f3f;">18,278</span>
<span class="t" style="left:1018.93px;top:614px;font-size:11.4px;color:#3f3f3f;">21,722</span>
<span class="t" style="left:1110.83px;top:615px;font-size:11.1px;color:#595959;">54.3%</span>
<span class="t tri" style="left:1100.00px;top:612.82px;font-size:12.0px;color:#0a0a0a;transform:scaleY(0.935)">▲</span>
<div class="r" style="left:235.80px;top:610.60px;width:17.40px;height:16.80px;background:#ededed;border:1px solid #b6b6b6"></div>
<span class="t" style="left:240.27px;top:612px;font-size:14.5px;color:#4d4d4d;-webkit-text-stroke:.3px #4d4d4d;">+</span>
<span class="t" style="left:334.70px;top:671px;font-size:11.3px;color:#404040;transform:scaleX(1.0371);">Building</span>
<span class="t" style="left:575.68px;top:671px;font-size:11.4px;color:#3f3f3f;">2,680,021</span>
<span class="t" style="left:660.88px;top:671px;font-size:11.4px;color:#3f3f3f;">2,580,021</span>
<span class="t" style="left:756.09px;top:671px;font-size:11.4px;color:#3f3f3f;">100,000</span>
<span class="t" style="left:860.20px;top:673px;font-size:11.1px;color:#595959;">3.7%</span>
<span class="t tri" style="left:849.37px;top:670.02px;font-size:12.0px;color:#0a0a0a;transform:scaleY(0.935)">▲</span>
<span class="t" style="left:917.58px;top:671px;font-size:11.4px;color:#3f3f3f;">2,280,021</span>
<span class="t" style="left:1012.59px;top:671px;font-size:11.4px;color:#3f3f3f;">400,000</span>
<span class="t" style="left:1110.83px;top:673px;font-size:11.1px;color:#595959;">14.9%</span>
<span class="t tri" style="left:1100.00px;top:670.02px;font-size:12.0px;color:#0a0a0a;transform:scaleY(0.935)">▲</span>
<div class="r" style="left:235.80px;top:667.80px;width:17.40px;height:16.80px;background:#ededed;border:1px solid #b6b6b6"></div>
<span class="t" style="left:240.27px;top:669px;font-size:14.5px;color:#4d4d4d;-webkit-text-stroke:.3px #4d4d4d;">+</span>
<span class="t" style="left:334.70px;top:690px;font-size:11.3px;color:#404040;transform:scaleX(1.0421);">Equipment</span>
<span class="t" style="left:585.19px;top:690px;font-size:11.4px;color:#3f3f3f;">998,262</span>
<span class="t" style="left:670.39px;top:690px;font-size:11.4px;color:#3f3f3f;">898,262</span>
<span class="t" style="left:756.09px;top:690px;font-size:11.4px;color:#3f3f3f;">100,000</span>
<span class="t" style="left:854.03px;top:692px;font-size:11.1px;color:#595959;">10.0%</span>
<span class="t tri" style="left:843.20px;top:689.22px;font-size:12.0px;color:#0a0a0a;transform:scaleY(0.935)">▲</span>
<span class="t" style="left:927.09px;top:690px;font-size:11.4px;color:#3f3f3f;">898,262</span>
<span class="t" style="left:1012.59px;top:690px;font-size:11.4px;color:#3f3f3f;">100,000</span>
<span class="t" style="left:1110.83px;top:692px;font-size:11.1px;color:#595959;">10.0%</span>
<span class="t tri" style="left:1100.00px;top:689.22px;font-size:12.0px;color:#0a0a0a;transform:scaleY(0.935)">▲</span>
<div class="r" style="left:235.80px;top:687.00px;width:17.40px;height:16.80px;background:#ededed;border:1px solid #b6b6b6"></div>
<span class="t" style="left:240.27px;top:688px;font-size:14.5px;color:#4d4d4d;-webkit-text-stroke:.3px #4d4d4d;">+</span>
<span class="t" style="left:334.70px;top:709px;font-size:11.3px;color:#404040;transform:scaleX(1.0145);">Vehicles and Others</span>
<span class="t" style="left:585.19px;top:709px;font-size:11.4px;color:#3f3f3f;">254,075</span>
<span class="t" style="left:670.39px;top:709px;font-size:11.4px;color:#3f3f3f;">134,075</span>
<span class="t" style="left:756.09px;top:709px;font-size:11.4px;color:#3f3f3f;">120,000</span>
<span class="t" style="left:854.03px;top:711px;font-size:11.1px;color:#595959;">47.2%</span>
<span class="t tri" style="left:843.20px;top:708.52px;font-size:12.0px;color:#0a0a0a;transform:scaleY(0.935)">▲</span>
<span class="t" style="left:933.43px;top:709px;font-size:11.4px;color:#3f3f3f;">76,244</span>
<span class="t" style="left:1012.59px;top:709px;font-size:11.4px;color:#3f3f3f;">177,831</span>
<span class="t" style="left:1110.83px;top:711px;font-size:11.1px;color:#595959;">70.0%</span>
<span class="t tri" style="left:1100.00px;top:708.52px;font-size:12.0px;color:#0a0a0a;transform:scaleY(0.935)">▲</span>
<div class="r" style="left:235.80px;top:706.30px;width:17.40px;height:16.80px;background:#ededed;border:1px solid #b6b6b6"></div>
<span class="t" style="left:240.27px;top:707px;font-size:14.5px;color:#4d4d4d;-webkit-text-stroke:.3px #4d4d4d;">+</span>
<span class="t" style="left:334.70px;top:728px;font-size:11.3px;color:#404040;transform:scaleX(1.0386);">Accumulated Depreciation</span>
<span class="t" style="left:580.80px;top:728px;font-size:11.4px;color:#3f3f3f;">(469,809)</span>
<span class="t" style="left:672.34px;top:728px;font-size:11.4px;color:#3f3f3f;">(22,675)</span>
<span class="t" style="left:751.70px;top:728px;font-size:11.4px;color:#3f3f3f;">(447,134)</span>
<span class="t" style="left:854.03px;top:730px;font-size:11.1px;color:#595959;">95.2%</span>
<span class="t tri" style="left:843.20px;top:727.62px;font-size:12.0px;color:#0a0a0a;transform:scaleY(0.935)">▲</span>
<span class="t" style="left:914.04px;top:728px;font-size:11.4px;color:#3f3f3f;">(1,218,311)</span>
<span class="t" style="left:1012.59px;top:728px;font-size:11.4px;color:#3f3f3f;">748,502</span>
<span class="t" style="left:1104.65px;top:730px;font-size:11.1px;color:#f92424;">159.3%</span>
<span class="t tri" style="left:1093.82px;top:727.22px;font-size:12.0px;color:#ff1a1a;transform:scaleY(0.935)">▼</span>
<div class="r" style="left:235.80px;top:725.40px;width:17.40px;height:16.80px;background:#ededed;border:1px solid #b6b6b6"></div>
<span class="t" style="left:240.27px;top:726px;font-size:14.5px;color:#4d4d4d;-webkit-text-stroke:.3px #4d4d4d;">+</span>
<div class="r" style="left:318.50px;top:628.60px;width:826.80px;height:18.00px;background:#ddebf7;"></div>
<div class="r" style="left:318.50px;top:627.80px;width:826.80px;height:1.10px;background:#222;"></div>
<div class="r" style="left:318.50px;top:646.20px;width:826.80px;height:2.00px;background:#111;"></div>
<span class="t" style="left:319.80px;top:634px;font-size:11.4px;color:#111;font-weight:700;transform:scaleX(0.9472);">Total Current Assets</span>
<span class="t" style="left:575.24px;top:634px;font-size:11.5px;color:#1a1a1a;font-weight:700;">1,461,052</span>
<span class="t" style="left:660.44px;top:634px;font-size:11.5px;color:#1a1a1a;font-weight:700;">1,305,893</span>
<span class="t" style="left:755.73px;top:634px;font-size:11.5px;color:#1a1a1a;font-weight:700;">155,159</span>
<span class="t" style="left:854.03px;top:636px;font-size:11.1px;color:#595959;">10.6%</span>
<span class="t tri" style="left:843.20px;top:633.12px;font-size:12.0px;color:#0a0a0a;transform:scaleY(0.935)">▲</span>
<span class="t" style="left:917.14px;top:634px;font-size:11.5px;color:#1a1a1a;font-weight:700;">2,971,455</span>
<span class="t" style="left:998.18px;top:634px;font-size:11.5px;color:#1a1a1a;font-weight:700;">(1,510,403)</span>
<span class="t" style="left:1104.65px;top:636px;font-size:11.1px;color:#f92424;">103.4%</span>
<span class="t tri" style="left:1093.82px;top:632.72px;font-size:12.0px;color:#ff1a1a;transform:scaleY(0.935)">▼</span>
<span class="t" style="left:327.70px;top:652px;font-size:11.2px;color:#1a1a1a;font-weight:700;">Property &amp; Equipment</span>
<div class="r" style="left:318.50px;top:744.40px;width:826.80px;height:17.60px;background:#ddebf7;"></div>
<div class="r" style="left:318.50px;top:743.60px;width:826.80px;height:1.10px;background:#5b6470;"></div>
<div class="r" style="left:318.50px;top:761.60px;width:826.80px;height:2.00px;background:#111;"></div>
<span class="t" style="left:319.80px;top:749px;font-size:11.4px;color:#111;font-weight:700;transform:scaleX(0.9732);">Total Property and Equipment</span>
<span class="t" style="left:575.24px;top:749px;font-size:11.5px;color:#1a1a1a;font-weight:700;">3,462,549</span>
<span class="t" style="left:660.44px;top:749px;font-size:11.5px;color:#1a1a1a;font-weight:700;">3,589,683</span>
<span class="t" style="left:751.27px;top:749px;font-size:11.5px;color:#1a1a1a;font-weight:700;">(127,134)</span>
<span class="t" style="left:860.20px;top:751px;font-size:11.1px;color:#f92424;">3.7%</span>
<span class="t tri" style="left:849.37px;top:748.12px;font-size:12.0px;color:#ff1a1a;transform:scaleY(0.935)">▼</span>
<span class="t" style="left:917.14px;top:749px;font-size:11.5px;color:#1a1a1a;font-weight:700;">2,036,216</span>
<span class="t" style="left:1002.64px;top:749px;font-size:11.5px;color:#1a1a1a;font-weight:700;">1,426,333</span>
<span class="t" style="left:1110.83px;top:751px;font-size:11.1px;color:#595959;">41.2%</span>
<span class="t tri" style="left:1100.00px;top:748.52px;font-size:12.0px;color:#0a0a0a;transform:scaleY(0.935)">▲</span>
<span class="t" style="left:327.70px;top:767px;font-size:11.4px;color:#1a1a1a;font-weight:700;transform:scaleX(0.9399);">Other Assets</span>
<span class="t" style="left:584.83px;top:767px;font-size:11.5px;color:#1a1a1a;font-weight:700;">138,706</span>
<span class="t" style="left:676.43px;top:767px;font-size:11.5px;color:#1a1a1a;font-weight:700;">38,706</span>
<span class="t" style="left:755.73px;top:767px;font-size:11.5px;color:#1a1a1a;font-weight:700;">100,000</span>
<span class="t" style="left:854.03px;top:769px;font-size:11.1px;color:#595959;">72.1%</span>
<span class="t tri" style="left:843.20px;top:766.02px;font-size:12.0px;color:#0a0a0a;transform:scaleY(0.935)">▲</span>
<span class="t" style="left:961.90px;top:767px;font-size:11.5px;color:#1a1a1a;font-weight:700;">0</span>
<span class="t" style="left:1012.23px;top:767px;font-size:11.5px;color:#1a1a1a;font-weight:700;">138,706</span>
<span class="t" style="left:1104.65px;top:769px;font-size:11.1px;color:#595959;">100.0%</span>
<span class="t tri" style="left:1093.82px;top:766.02px;font-size:12.0px;color:#0a0a0a;transform:scaleY(0.935)">▲</span>
<div class="r" style="left:235.80px;top:764.40px;width:17.40px;height:16.80px;background:#ededed;border:1px solid #b6b6b6"></div>
<span class="t" style="left:240.27px;top:765px;font-size:14.5px;color:#4d4d4d;-webkit-text-stroke:.3px #4d4d4d;">+</span>
<div class="r" style="left:318.50px;top:789.00px;width:826.80px;height:17.80px;background:#c6e0b4;"></div>
<div class="r" style="left:318.50px;top:788.00px;width:826.80px;height:1.60px;background:#4a4a4a;"></div>
<div class="r" style="left:318.50px;top:806.40px;width:826.80px;height:2.00px;background:#111;"></div>
<span class="t" style="left:319.80px;top:794px;font-size:11.4px;color:#111;font-weight:700;transform:scaleX(0.8579);">TOTAL ASSETS</span>
<span class="t" style="left:575.24px;top:794px;font-size:11.5px;color:#1a1a1a;font-weight:700;">5,062,307</span>
<span class="t" style="left:660.44px;top:794px;font-size:11.5px;color:#1a1a1a;font-weight:700;">4,934,282</span>
<span class="t" style="left:755.73px;top:794px;font-size:11.5px;color:#1a1a1a;font-weight:700;">128,025</span>
<span class="t" style="left:860.20px;top:796px;font-size:11.1px;color:#595959;">2.5%</span>
<span class="t tri" style="left:849.37px;top:793.12px;font-size:12.0px;color:#0a0a0a;transform:scaleY(0.935)">▲</span>
<span class="t" style="left:917.14px;top:794px;font-size:11.5px;color:#1a1a1a;font-weight:700;">5,007,671</span>
<span class="t" style="left:1018.63px;top:794px;font-size:11.5px;color:#1a1a1a;font-weight:700;">54,636</span>
<span class="t" style="left:1117.00px;top:796px;font-size:11.1px;color:#595959;">1.1%</span>
<span class="t tri" style="left:1106.17px;top:793.12px;font-size:12.0px;color:#0a0a0a;transform:scaleY(0.935)">▲</span>
</div>
<div id="edge"></div>
</body></html>
